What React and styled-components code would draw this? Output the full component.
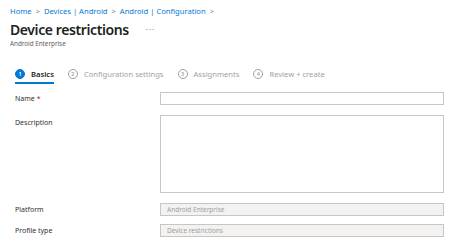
import React from 'react'
import styled, { createGlobalStyle } from 'styled-components'

const Global = createGlobalStyle`
  html, body { margin: 0; padding: 0; background: #fff; }
  body { font-family: "Noto Sans", "Open Sans", sans-serif; color: #323130; }
`

const Page = styled.div`
  width: 450px;
  height: 243px;
  overflow: hidden;
  padding: 4px 6px 0 10px;
  box-sizing: border-box;
`

const Crumbs = styled.nav`
  display: flex;
  align-items: center;
  gap: 4px;
  font-size: 7.6px;
  color: #0078d4;
  height: 13px;
`

const Chevron = styled.span`
  color: #8a8886;
  font-size: 7.5px;
`

const TitleRow = styled.div`
  display: flex;
  align-items: center;
  gap: 17px;
  margin-top: 2px;
  height: 20px;
`

const Title = styled.h1`
  margin: 0;
  font-size: 14px;
  font-weight: 600;
  color: #201f1e;
  letter-spacing: -0.4px;
`

const More = styled.span`
  color: #8a8886;
  font-size: 8px;
  letter-spacing: 1px;
`

const Subtitle = styled.div`
  font-size: 6.3px;
  color: #605e5c;
`

const Tabs = styled.div`
  display: flex;
  gap: 14px;
  margin-top: 16px;
  padding-left: 5px;
`

const Tab = styled.div`
  display: flex;
  align-items: center;
  gap: 6px;
  height: 20px;
  font-size: 7.6px;
  color: ${p => (p.$active ? '#201f1e' : '#a19f9d')};
  font-weight: ${p => (p.$active ? 600 : 400)};
  border-bottom: 2px solid ${p => (p.$active ? '#0078d4' : 'transparent')};
  box-sizing: border-box;
  padding-top: 2px;
`

const Step = styled.span`
  width: 10px;
  height: 10px;
  border-radius: 50%;
  box-sizing: border-box;
  display: inline-flex;
  align-items: center;
  justify-content: center;
  font-size: 5.5px;
  font-weight: 600;
  background: ${p => (p.$active ? '#0078d4' : 'transparent')};
  color: ${p => (p.$active ? '#fff' : '#a19f9d')};
  border: 1px solid ${p => (p.$active ? '#0078d4' : '#a19f9d')};
`

const Form = styled.div`
  display: flex;
  flex-direction: column;
  padding-left: 5px;
  margin-top: 8px;
`

const Row = styled.div`
  display: grid;
  grid-template-columns: 145px 284px;
  align-items: start;
  margin-bottom: ${p => p.$gap || 10}px;
`

const Label = styled.div`
  font-size: 7px;
  color: #323130;
  line-height: 13px;
  padding-top: ${p => (p.$top ? 1 : 0)}px;
`

const Req = styled.span`
  color: #a4262c;
  margin-left: 2px;
`

const Field = styled.div`
  height: ${p => p.$h || 13}px;
  border: 1px solid #c8c6c4;
  background: ${p => (p.$disabled ? '#f3f2f1' : '#fff')};
  box-sizing: border-box;
  font-size: 6.5px;
  color: #a19f9d;
  padding-left: 6px;
  line-height: 11px;
`

export default function App() {
  const tabs = ['Basics', 'Configuration settings', 'Assignments', 'Review + create']
  return (
    <>
      <Global />
      <Page>
        <Crumbs>
          <span>Home</span>
          <Chevron>&gt;</Chevron>
          <span>Devices | Android</span>
          <Chevron>&gt;</Chevron>
          <span>Android | Configuration</span>
          <Chevron>&gt;</Chevron>
        </Crumbs>
        <TitleRow>
          <Title>Device restrictions</Title>
          <More>···</More>
        </TitleRow>
        <Subtitle>Android Enterprise</Subtitle>
        <Tabs>
          {tabs.map((t, i) => (
            <Tab key={t} $active={i === 0}>
              <Step $active={i === 0}>{i + 1}</Step>
              {t}
            </Tab>
          ))}
        </Tabs>
        <Form>
          <Row $gap={10}>
            <Label>
              Name<Req>*</Req>
            </Label>
            <Field />
          </Row>
          <Row $gap={10}>
            <Label $top>Description</Label>
            <Field $h={78} />
          </Row>
          <Row $gap={8}>
            <Label>Platform</Label>
            <Field $disabled>Android Enterprise</Field>
          </Row>
          <Row $gap={0}>
            <Label>Profile type</Label>
            <Field $disabled>Device restrictions</Field>
          </Row>
        </Form>
      </Page>
    </>
  )
}
